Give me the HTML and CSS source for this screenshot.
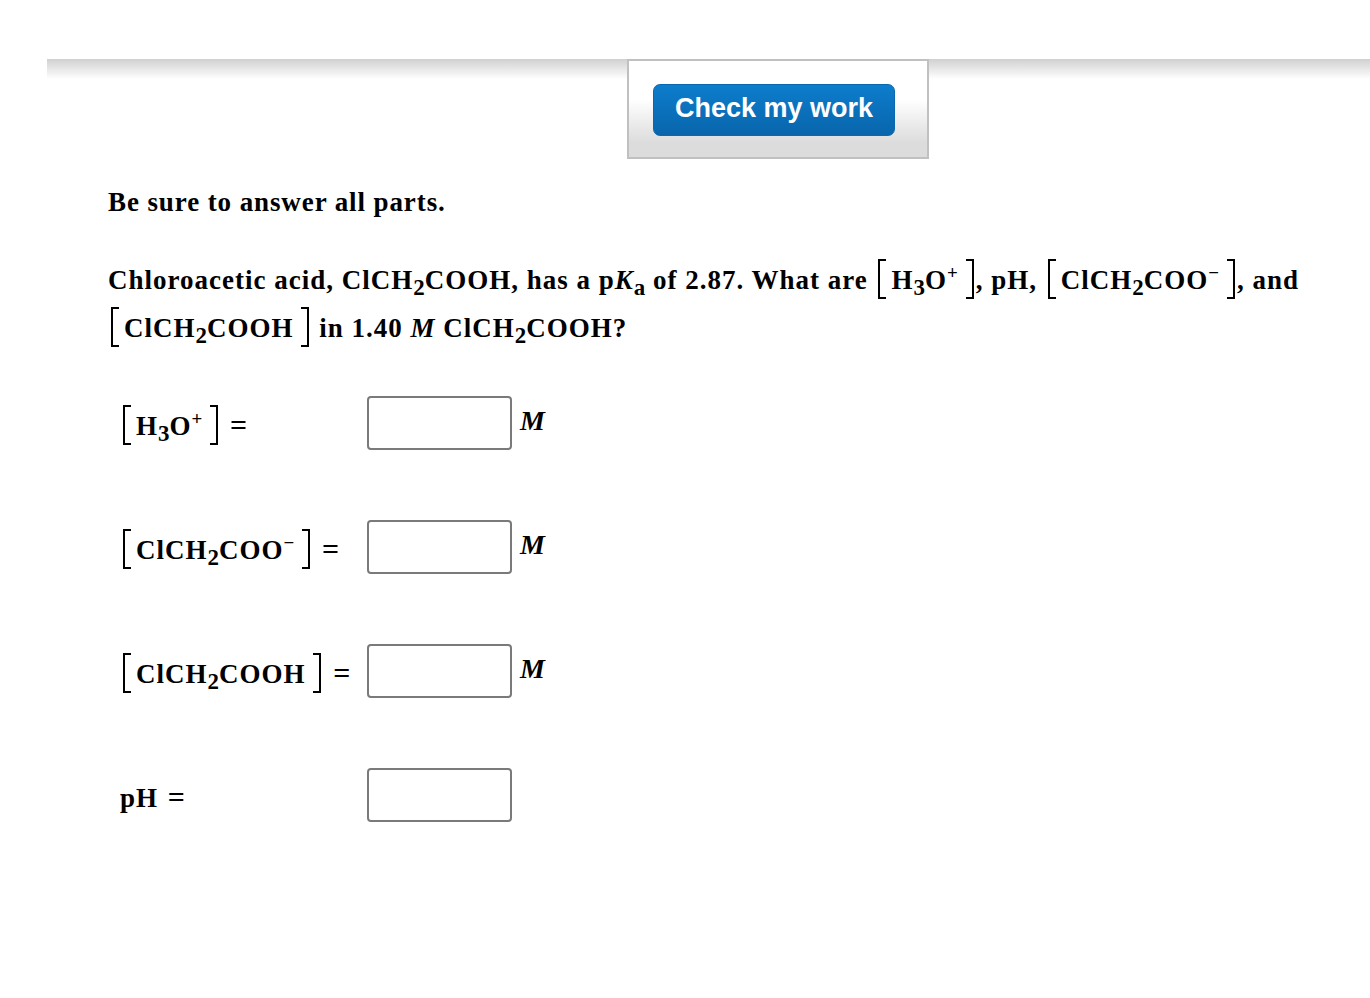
FILE: index.html
```html
<!DOCTYPE html>
<html lang="en">
<head>
<meta charset="UTF-8">
<title>Question</title>
<link rel="stylesheet" href="styles.css">
</head>
<body>
<!-- top bar with check button -->
<div class="topbar">
  <div class="checkbox">
    <button class="check">Check my work</button>
  </div>
</div>

<div class="content">
  <p class="intro">Be sure to answer all parts.</p>

  <p class="question">Chloroacetic acid, ClCH<sub>2</sub>COOH, has a p<i>K</i><sub>a</sub> of 2.87. What are
    <span class="grp"><span class="br l"></span>H<sub>3</sub>O<sup>+</sup><span class="br r"></span>,</span> pH,
    <span class="grp"><span class="br l"></span>ClCH<sub>2</sub>COO<sup>&minus;</sup><span class="br r"></span>,</span> and
    <span class="grp"><span class="br l"></span>ClCH<sub>2</sub>COOH<span class="br r"></span></span> in 1.40 <i>M</i> ClCH<sub>2</sub>COOH?</p>

  <!-- answer rows -->
  <div class="answers">
    <div class="lbl"><span class="br l"></span>H<sub>3</sub>O<sup>+</sup><span class="br r"></span> <span class="eq">=</span></div>
    <input class="ans" type="text">
    <div class="unit">M</div>

    <div class="lbl"><span class="br l"></span>ClCH<sub>2</sub>COO<sup>&minus;</sup><span class="br r"></span> <span class="eq">=</span></div>
    <input class="ans" type="text">
    <div class="unit">M</div>

    <div class="lbl"><span class="br l"></span>ClCH<sub>2</sub>COOH<span class="br r"></span> <span class="eq">=</span></div>
    <input class="ans" type="text">
    <div class="unit">M</div>

    <div class="lbl">pH <span class="eq">=</span></div>
    <input class="ans" type="text">
    <div class="unit"></div>
  </div>
</div>
</body>
</html>
```

FILE: styles.css
```css
body{margin:0;background:#fff;color:#000;font-family:"Liberation Serif","Times New Roman",serif}
/* top bar */
.topbar{margin:59px 0 0 47px;height:100px;
        background:linear-gradient(#d0d0d0,#fff) no-repeat;background-size:100% 20px}
.checkbox{margin-left:580px;width:298px;height:96px;border:2px solid #c0c0c0;
          background:linear-gradient(#fff 40%,#dcdcdc 85%);display:flex;align-items:flex-start}
.check{margin:23px 0 0 24px;width:242px;height:52px;border:1px solid #0a68b0;border-radius:7px;
       background:linear-gradient(#0d7dcc,#0865ac);color:#fff;
       font:bold 27px "Liberation Sans",Arial,sans-serif;padding:0 0 4px}
/* question text */
.content{padding-left:108px}
.intro{margin:27px 0 0;font-weight:bold;font-size:27px;line-height:32px;letter-spacing:.9px}
.question{margin:38px 0 0;font-weight:bold;font-size:27px;line-height:48px;letter-spacing:1px;width:1230px}
.grp{white-space:nowrap}
sub,sup{font-size:85%;line-height:0;letter-spacing:0}
sub{vertical-align:-6px}
sup{vertical-align:10px;font-size:70%}
.br{display:inline-block;width:6px;height:36px;border:2px solid #000;vertical-align:-10px}
.br.l{border-right:none;margin:0 5px 0 3px}
.br.r{border-left:none;margin:0 2px 0 8px}
/* answers */
.answers{margin-top:44px;padding-left:12px;display:grid;
         grid-template-columns:247px 145px auto;row-gap:70px;align-items:center;justify-items:start}
.lbl{font-weight:bold;font-size:27px;line-height:40px;padding-top:4px;letter-spacing:1px}
.eq{font-size:30px;margin-left:2px}
.ans{box-sizing:border-box;width:145px;height:54px;border:2px solid #7a7a7a;border-radius:4px;margin:0}
.unit{font-weight:bold;font-style:italic;font-size:28px;margin-left:8px;padding-bottom:4px}
```
